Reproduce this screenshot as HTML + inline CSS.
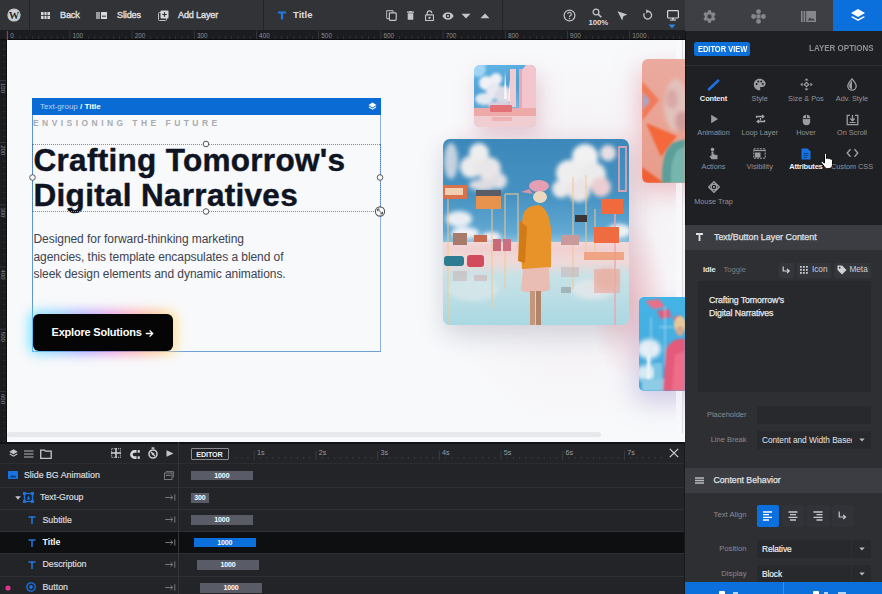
<!DOCTYPE html>
<html><head><meta charset="utf-8">
<style>
*{box-sizing:border-box;margin:0;padding:0}
html,body{width:882px;height:594px;overflow:hidden;background:#1e1f22;font-family:"Liberation Sans",sans-serif}
.a{position:absolute}
.t{color:#d5d6d8;white-space:nowrap}
</style></head><body>
<div class="a" style="left:0;top:0;width:685px;height:30px;background:#323337"></div>
<div class="a" style="left:685px;top:0;width:197px;height:31px;background:#3d3f44"></div>
<div class="a" style="left:7px;top:40px;width:678px;height:402px;background:#f8f9fb"></div>
<!-- TOP BAR -->
<div class="a" style="left:29px;top:0;width:1px;height:30px;background:#222327"></div>
<div class="a" style="left:263px;top:0;width:1px;height:30px;background:#222327"></div>
<div class="a" style="left:502px;top:0;width:1px;height:30px;background:#222327"></div>
<svg class="a" style="left:6.5px;top:8px" width="14" height="14" viewBox="0 0 14 14"><circle cx="7" cy="7" r="6.6" fill="#d4d5d7"/><circle cx="7" cy="7" r="5.6" fill="none" stroke="#9a9b9e" stroke-width="0.4"/><text x="7" y="10.6" text-anchor="middle" font-family="Liberation Serif" font-weight="bold" font-size="10.5" fill="#2a2b2f">W</text></svg>
<svg class="a" style="left:41px;top:12px" width="9" height="7" viewBox="0 0 9 7"><rect width="9" height="7" fill="#d6d7d9"/><path d="M3 0v7M6 0v7M0 3.5h9" stroke="#2c2d31" stroke-width="0.8"/></svg>
<div class="a t" style="left:60px;top:9px;font-size:9.1px;line-height:12px;color:#e0e1e3;-webkit-text-stroke:0.35px #e0e1e3;letter-spacing:-0.15px">Back</div>
<svg class="a" style="left:96px;top:12px" width="11" height="7" viewBox="0 0 11 7"><rect width="4" height="7" fill="#9a9b9e"/><rect x="5" width="6" height="7" fill="#d6d7d9"/><path d="M6 4.2h4" stroke="#2c2d31" stroke-width="1"/></svg>
<div class="a t" style="left:117px;top:9px;font-size:9.1px;line-height:12px;color:#e0e1e3;-webkit-text-stroke:0.35px #e0e1e3;letter-spacing:-0.15px">Slides</div>
<svg class="a" style="left:158px;top:10px" width="11" height="11" viewBox="0 0 11 11"><rect x="0.5" y="2.5" width="8" height="8" rx="1" fill="none" stroke="#bfc0c3" stroke-width="1"/><rect x="2.5" y="0.5" width="8" height="8" rx="1" fill="#d6d7d9"/><path d="M6.5 2.3v4.4M4.3 4.5h4.4" stroke="#2c2d31" stroke-width="1.2"/></svg>
<div class="a t" style="left:178px;top:9px;font-size:9.1px;line-height:12px;color:#e0e1e3;-webkit-text-stroke:0.35px #e0e1e3;letter-spacing:-0.15px">Add Layer</div>
<svg class="a" style="left:277px;top:11px" width="10" height="9" viewBox="0 0 10 9"><path d="M1 1.5h8M5 1.5v7" stroke="#1f7be3" stroke-width="2.2"/></svg>
<div class="a t" style="left:293px;top:9px;font-size:9.6px;line-height:12px;font-weight:bold;color:#dcdde0">Title</div>
<svg class="a" style="left:386px;top:10px" width="11" height="11" viewBox="0 0 11 11"><rect x="0.6" y="0.6" width="6.5" height="8" rx="0.8" fill="none" stroke="#a9aaad" stroke-width="1.1"/><rect x="3.4" y="2.8" width="6.8" height="7.6" rx="0.8" fill="#2c2d31" stroke="#c4c5c8" stroke-width="1.2"/></svg>
<svg class="a" style="left:407px;top:11px" width="7" height="9" viewBox="0 0 7 9"><rect x="0" y="0.5" width="7" height="1.3" fill="#c4c5c8"/><rect x="2.2" y="0" width="2.6" height="1" fill="#c4c5c8"/><rect x="0.7" y="2.3" width="5.6" height="6.5" rx="0.6" fill="#c4c5c8"/></svg>
<svg class="a" style="left:425px;top:10px" width="9" height="11" viewBox="0 0 9 11"><path d="M2.2 5V3.2a2.3 2.3 0 0 1 4.6 0" fill="none" stroke="#c4c5c8" stroke-width="1.2"/><rect x="0.5" y="4.8" width="8" height="5.8" rx="0.8" fill="none" stroke="#c4c5c8" stroke-width="1.2"/><rect x="3.5" y="6.8" width="2" height="2" fill="#c4c5c8"/></svg>
<svg class="a" style="left:442px;top:12px" width="12" height="8" viewBox="0 0 12 8"><path d="M0.3 4C2 1.2 3.8 0.3 6 0.3S10 1.2 11.7 4C10 6.8 8.2 7.7 6 7.7S2 6.8 0.3 4Z" fill="#c4c5c8"/><circle cx="6" cy="4" r="2.3" fill="#2c2d31"/><circle cx="6" cy="4" r="1.1" fill="#c4c5c8"/></svg>
<svg class="a" style="left:461px;top:13px" width="10" height="6" viewBox="0 0 10 6"><path d="M0.5 0.8h9L5 5.5Z" fill="#c4c5c8"/></svg>
<svg class="a" style="left:480px;top:13px" width="10" height="6" viewBox="0 0 10 6"><path d="M0.5 5.2h9L5 0.5Z" fill="#c4c5c8"/></svg>
<svg class="a" style="left:563px;top:9px" width="13" height="13" viewBox="0 0 13 13"><circle cx="6.5" cy="6.5" r="5.4" fill="none" stroke="#c4c5c8" stroke-width="1.2"/><path d="M4.7 5.1a1.8 1.8 0 1 1 2.5 1.6c-0.5 0.3-0.7 0.6-0.7 1.2" fill="none" stroke="#c4c5c8" stroke-width="1.2"/><circle cx="6.5" cy="9.6" r="0.75" fill="#c4c5c8"/></svg>
<svg class="a" style="left:592px;top:8px" width="10" height="10" viewBox="0 0 10 10"><circle cx="4" cy="4" r="2.9" fill="none" stroke="#c4c5c8" stroke-width="1.3"/><path d="M6.1 6.1L9.3 9.3" stroke="#c4c5c8" stroke-width="1.6"/></svg>
<div class="a t" style="left:588.5px;top:18px;font-size:7.8px;line-height:9px;font-weight:bold;color:#dcdde0;letter-spacing:-0.1px">100%</div>
<svg class="a" style="left:617px;top:10px" width="11" height="11" viewBox="0 0 11 11"><path d="M0.5 1.2L10.3 4.6L6.4 6.2L5.2 10.4Z" fill="#c4c5c8"/></svg>
<svg class="a" style="left:641px;top:9px" width="12" height="12" viewBox="0 0 12 12"><path d="M3.3 4.2A3.9 3.9 0 1 0 6 2.3" fill="none" stroke="#c4c5c8" stroke-width="1.3"/><path d="M5.2 0.2L8 2.4L5.2 4.5Z" fill="#c4c5c8"/></svg>
<svg class="a" style="left:666.5px;top:10px" width="12" height="11" viewBox="0 0 12 11"><rect x="0.6" y="0.6" width="10.8" height="7.4" rx="0.8" fill="none" stroke="#d6d7d9" stroke-width="1.2"/><rect x="5" y="8" width="2" height="1.6" fill="#d6d7d9"/><rect x="3" y="9.5" width="6" height="1.1" fill="#d6d7d9"/></svg>
<svg class="a" style="left:668px;top:24px" width="8" height="5" viewBox="0 0 8 5"><path d="M0.5 0.5h7L4 4.5Z" fill="#2b86ea"/></svg>
<!-- TABS -->
<div class="a" style="left:833px;top:0;width:49px;height:31px;background:#0b6fdc"></div>
<svg class="a" style="left:702px;top:9px" width="15" height="15" viewBox="0 0 24 24"><path fill="#86878b" d="M19.4 13c.04-.33.06-.66.06-1s-.02-.67-.06-1l2.1-1.65c.19-.15.24-.42.12-.64l-2-3.46c-.12-.22-.39-.3-.61-.22l-2.49 1c-.52-.4-1.08-.73-1.69-.98l-.38-2.65A.49.49 0 0 0 14 2h-4c-.25 0-.46.18-.49.42l-.38 2.65c-.61.25-1.17.59-1.69.98l-2.49-1c-.23-.09-.49 0-.61.22l-2 3.46c-.13.22-.07.49.12.64L4.57 11c-.04.33-.07.67-.07 1s.03.67.07 1l-2.11 1.65c-.19.15-.24.42-.12.64l2 3.46c.12.22.39.3.61.22l2.49-1c.52.4 1.08.73 1.69.98l.38 2.65c.03.24.24.42.49.42h4c.25 0 .46-.18.49-.42l.38-2.65c.61-.25 1.17-.59 1.69-.98l2.49 1c.23.09.49 0 .61-.22l2-3.46c.12-.22.07-.49-.12-.64L19.4 13zM12 15.5A3.5 3.5 0 1 1 12 8.5a3.5 3.5 0 0 1 0 7z"/></svg>
<svg class="a" style="left:751px;top:9px" width="15" height="15" viewBox="0 0 15 15"><circle cx="7.5" cy="2.6" r="2.4" fill="#86878b"/><circle cx="7.5" cy="12.4" r="2.4" fill="#86878b"/><circle cx="2.6" cy="7.5" r="2.4" fill="#86878b"/><circle cx="12.4" cy="7.5" r="2.4" fill="#86878b"/><rect x="5.5" y="5.5" width="4" height="4" fill="#86878b"/></svg>
<svg class="a" style="left:801px;top:11px" width="15" height="11" viewBox="0 0 15 11"><rect x="0" y="0" width="1.6" height="11" fill="#86878b"/><rect x="2.6" y="0" width="1.6" height="11" fill="#86878b"/><rect x="5.2" y="0" width="9.8" height="11" fill="#86878b"/><path d="M6.5 9.5L9 6.5L10.8 8.3L12 7.2L13.8 9.5Z" fill="#3d3f44"/></svg>
<svg class="a" style="left:850px;top:8px" width="16" height="16" viewBox="0 0 16 16"><path d="M8 1L15 5L8 9L1 5Z" fill="#fff"/><path d="M2.5 8.2L1 9L8 13L15 9L13.5 8.2L8 11.3Z" fill="#fff"/></svg>

<svg class="a" style="left:0;top:30px" width="685" height="11" viewBox="0 0 685 11">
<rect x="0" y="0" width="685" height="10" fill="#1b1c1f"/>
<rect x="7.30" y="1" width="0.8" height="9" fill="#3d3e42"/>
<text x="10.30" y="7.6" font-size="6.4" fill="#8e8f93" font-family="Liberation Sans">0</text>
<rect x="13.52" y="6" width="0.8" height="3.5" fill="#36373b"/>
<rect x="19.74" y="6" width="0.8" height="3.5" fill="#36373b"/>
<rect x="25.96" y="6" width="0.8" height="3.5" fill="#36373b"/>
<rect x="32.18" y="6" width="0.8" height="3.5" fill="#36373b"/>
<rect x="38.40" y="6" width="0.8" height="3.5" fill="#36373b"/>
<rect x="44.62" y="6" width="0.8" height="3.5" fill="#36373b"/>
<rect x="50.84" y="6" width="0.8" height="3.5" fill="#36373b"/>
<rect x="57.06" y="6" width="0.8" height="3.5" fill="#36373b"/>
<rect x="63.28" y="6" width="0.8" height="3.5" fill="#36373b"/>
<rect x="69.50" y="1" width="0.8" height="9" fill="#3d3e42"/>
<text x="72.50" y="7.6" font-size="6.4" fill="#8e8f93" font-family="Liberation Sans">100</text>
<rect x="75.72" y="6" width="0.8" height="3.5" fill="#36373b"/>
<rect x="81.94" y="6" width="0.8" height="3.5" fill="#36373b"/>
<rect x="88.16" y="6" width="0.8" height="3.5" fill="#36373b"/>
<rect x="94.38" y="6" width="0.8" height="3.5" fill="#36373b"/>
<rect x="100.60" y="6" width="0.8" height="3.5" fill="#36373b"/>
<rect x="106.82" y="6" width="0.8" height="3.5" fill="#36373b"/>
<rect x="113.04" y="6" width="0.8" height="3.5" fill="#36373b"/>
<rect x="119.26" y="6" width="0.8" height="3.5" fill="#36373b"/>
<rect x="125.48" y="6" width="0.8" height="3.5" fill="#36373b"/>
<rect x="131.70" y="1" width="0.8" height="9" fill="#3d3e42"/>
<text x="134.70" y="7.6" font-size="6.4" fill="#8e8f93" font-family="Liberation Sans">200</text>
<rect x="137.92" y="6" width="0.8" height="3.5" fill="#36373b"/>
<rect x="144.14" y="6" width="0.8" height="3.5" fill="#36373b"/>
<rect x="150.36" y="6" width="0.8" height="3.5" fill="#36373b"/>
<rect x="156.58" y="6" width="0.8" height="3.5" fill="#36373b"/>
<rect x="162.80" y="6" width="0.8" height="3.5" fill="#36373b"/>
<rect x="169.02" y="6" width="0.8" height="3.5" fill="#36373b"/>
<rect x="175.24" y="6" width="0.8" height="3.5" fill="#36373b"/>
<rect x="181.46" y="6" width="0.8" height="3.5" fill="#36373b"/>
<rect x="187.68" y="6" width="0.8" height="3.5" fill="#36373b"/>
<rect x="193.90" y="1" width="0.8" height="9" fill="#3d3e42"/>
<text x="196.90" y="7.6" font-size="6.4" fill="#8e8f93" font-family="Liberation Sans">300</text>
<rect x="200.12" y="6" width="0.8" height="3.5" fill="#36373b"/>
<rect x="206.34" y="6" width="0.8" height="3.5" fill="#36373b"/>
<rect x="212.56" y="6" width="0.8" height="3.5" fill="#36373b"/>
<rect x="218.78" y="6" width="0.8" height="3.5" fill="#36373b"/>
<rect x="225.00" y="6" width="0.8" height="3.5" fill="#36373b"/>
<rect x="231.22" y="6" width="0.8" height="3.5" fill="#36373b"/>
<rect x="237.44" y="6" width="0.8" height="3.5" fill="#36373b"/>
<rect x="243.66" y="6" width="0.8" height="3.5" fill="#36373b"/>
<rect x="249.88" y="6" width="0.8" height="3.5" fill="#36373b"/>
<rect x="256.10" y="1" width="0.8" height="9" fill="#3d3e42"/>
<text x="259.10" y="7.6" font-size="6.4" fill="#8e8f93" font-family="Liberation Sans">400</text>
<rect x="262.32" y="6" width="0.8" height="3.5" fill="#36373b"/>
<rect x="268.54" y="6" width="0.8" height="3.5" fill="#36373b"/>
<rect x="274.76" y="6" width="0.8" height="3.5" fill="#36373b"/>
<rect x="280.98" y="6" width="0.8" height="3.5" fill="#36373b"/>
<rect x="287.20" y="6" width="0.8" height="3.5" fill="#36373b"/>
<rect x="293.42" y="6" width="0.8" height="3.5" fill="#36373b"/>
<rect x="299.64" y="6" width="0.8" height="3.5" fill="#36373b"/>
<rect x="305.86" y="6" width="0.8" height="3.5" fill="#36373b"/>
<rect x="312.08" y="6" width="0.8" height="3.5" fill="#36373b"/>
<rect x="318.30" y="1" width="0.8" height="9" fill="#3d3e42"/>
<text x="321.30" y="7.6" font-size="6.4" fill="#8e8f93" font-family="Liberation Sans">500</text>
<rect x="324.52" y="6" width="0.8" height="3.5" fill="#36373b"/>
<rect x="330.74" y="6" width="0.8" height="3.5" fill="#36373b"/>
<rect x="336.96" y="6" width="0.8" height="3.5" fill="#36373b"/>
<rect x="343.18" y="6" width="0.8" height="3.5" fill="#36373b"/>
<rect x="349.40" y="6" width="0.8" height="3.5" fill="#36373b"/>
<rect x="355.62" y="6" width="0.8" height="3.5" fill="#36373b"/>
<rect x="361.84" y="6" width="0.8" height="3.5" fill="#36373b"/>
<rect x="368.06" y="6" width="0.8" height="3.5" fill="#36373b"/>
<rect x="374.28" y="6" width="0.8" height="3.5" fill="#36373b"/>
<rect x="380.50" y="1" width="0.8" height="9" fill="#3d3e42"/>
<text x="383.50" y="7.6" font-size="6.4" fill="#8e8f93" font-family="Liberation Sans">600</text>
<rect x="386.72" y="6" width="0.8" height="3.5" fill="#36373b"/>
<rect x="392.94" y="6" width="0.8" height="3.5" fill="#36373b"/>
<rect x="399.16" y="6" width="0.8" height="3.5" fill="#36373b"/>
<rect x="405.38" y="6" width="0.8" height="3.5" fill="#36373b"/>
<rect x="411.60" y="6" width="0.8" height="3.5" fill="#36373b"/>
<rect x="417.82" y="6" width="0.8" height="3.5" fill="#36373b"/>
<rect x="424.04" y="6" width="0.8" height="3.5" fill="#36373b"/>
<rect x="430.26" y="6" width="0.8" height="3.5" fill="#36373b"/>
<rect x="436.48" y="6" width="0.8" height="3.5" fill="#36373b"/>
<rect x="442.70" y="1" width="0.8" height="9" fill="#3d3e42"/>
<text x="445.70" y="7.6" font-size="6.4" fill="#8e8f93" font-family="Liberation Sans">700</text>
<rect x="448.92" y="6" width="0.8" height="3.5" fill="#36373b"/>
<rect x="455.14" y="6" width="0.8" height="3.5" fill="#36373b"/>
<rect x="461.36" y="6" width="0.8" height="3.5" fill="#36373b"/>
<rect x="467.58" y="6" width="0.8" height="3.5" fill="#36373b"/>
<rect x="473.80" y="6" width="0.8" height="3.5" fill="#36373b"/>
<rect x="480.02" y="6" width="0.8" height="3.5" fill="#36373b"/>
<rect x="486.24" y="6" width="0.8" height="3.5" fill="#36373b"/>
<rect x="492.46" y="6" width="0.8" height="3.5" fill="#36373b"/>
<rect x="498.68" y="6" width="0.8" height="3.5" fill="#36373b"/>
<rect x="504.90" y="1" width="0.8" height="9" fill="#3d3e42"/>
<text x="507.90" y="7.6" font-size="6.4" fill="#8e8f93" font-family="Liberation Sans">800</text>
<rect x="511.12" y="6" width="0.8" height="3.5" fill="#36373b"/>
<rect x="517.34" y="6" width="0.8" height="3.5" fill="#36373b"/>
<rect x="523.56" y="6" width="0.8" height="3.5" fill="#36373b"/>
<rect x="529.78" y="6" width="0.8" height="3.5" fill="#36373b"/>
<rect x="536.00" y="6" width="0.8" height="3.5" fill="#36373b"/>
<rect x="542.22" y="6" width="0.8" height="3.5" fill="#36373b"/>
<rect x="548.44" y="6" width="0.8" height="3.5" fill="#36373b"/>
<rect x="554.66" y="6" width="0.8" height="3.5" fill="#36373b"/>
<rect x="560.88" y="6" width="0.8" height="3.5" fill="#36373b"/>
<rect x="567.10" y="1" width="0.8" height="9" fill="#3d3e42"/>
<text x="570.10" y="7.6" font-size="6.4" fill="#8e8f93" font-family="Liberation Sans">900</text>
<rect x="573.32" y="6" width="0.8" height="3.5" fill="#36373b"/>
<rect x="579.54" y="6" width="0.8" height="3.5" fill="#36373b"/>
<rect x="585.76" y="6" width="0.8" height="3.5" fill="#36373b"/>
<rect x="591.98" y="6" width="0.8" height="3.5" fill="#36373b"/>
<rect x="598.20" y="6" width="0.8" height="3.5" fill="#36373b"/>
<rect x="604.42" y="6" width="0.8" height="3.5" fill="#36373b"/>
<rect x="610.64" y="6" width="0.8" height="3.5" fill="#36373b"/>
<rect x="616.86" y="6" width="0.8" height="3.5" fill="#36373b"/>
<rect x="623.08" y="6" width="0.8" height="3.5" fill="#36373b"/>
<rect x="629.30" y="1" width="0.8" height="9" fill="#3d3e42"/>
<text x="632.30" y="7.6" font-size="6.4" fill="#8e8f93" font-family="Liberation Sans">1000</text>
<rect x="635.52" y="6" width="0.8" height="3.5" fill="#36373b"/>
<rect x="641.74" y="6" width="0.8" height="3.5" fill="#36373b"/>
<rect x="647.96" y="6" width="0.8" height="3.5" fill="#36373b"/>
<rect x="654.18" y="6" width="0.8" height="3.5" fill="#36373b"/>
<rect x="660.40" y="6" width="0.8" height="3.5" fill="#36373b"/>
<rect x="666.62" y="6" width="0.8" height="3.5" fill="#36373b"/>
<rect x="672.84" y="6" width="0.8" height="3.5" fill="#36373b"/>
<rect x="679.06" y="6" width="0.8" height="3.5" fill="#36373b"/>
<rect x="0" y="9" width="685" height="1" fill="#0c0c0e"/><rect x="6.8" y="1" width="1.2" height="9" fill="#b0305a"/>
<rect x="0" y="10" width="7" height="1" fill="#b0305a"/>
</svg>
<svg class="a" style="left:0;top:40px" width="7" height="402" viewBox="0 0 7 402">
<rect width="7" height="402" fill="#1b1c1f"/>
<rect x="6" width="1" height="402" fill="#0c0c0e"/>
<rect x="0" y="-22.20" width="6" height="0.8" fill="#3d3e42"/>
<rect x="3" y="-15.98" width="3" height="0.8" fill="#2e2f33"/>
<rect x="3" y="-9.76" width="3" height="0.8" fill="#2e2f33"/>
<rect x="3" y="-3.54" width="3" height="0.8" fill="#2e2f33"/>
<rect x="3" y="2.68" width="3" height="0.8" fill="#2e2f33"/>
<rect x="3" y="8.90" width="3" height="0.8" fill="#2e2f33"/>
<rect x="3" y="15.12" width="3" height="0.8" fill="#2e2f33"/>
<rect x="3" y="21.34" width="3" height="0.8" fill="#2e2f33"/>
<rect x="3" y="27.56" width="3" height="0.8" fill="#2e2f33"/>
<rect x="3" y="33.78" width="3" height="0.8" fill="#2e2f33"/>
<text transform="translate(1 -19.20) rotate(90)" font-size="6" fill="#8e8f93" font-family="Liberation Sans">0</text>
<rect x="0" y="40.00" width="6" height="0.8" fill="#3d3e42"/>
<rect x="3" y="46.22" width="3" height="0.8" fill="#2e2f33"/>
<rect x="3" y="52.44" width="3" height="0.8" fill="#2e2f33"/>
<rect x="3" y="58.66" width="3" height="0.8" fill="#2e2f33"/>
<rect x="3" y="64.88" width="3" height="0.8" fill="#2e2f33"/>
<rect x="3" y="71.10" width="3" height="0.8" fill="#2e2f33"/>
<rect x="3" y="77.32" width="3" height="0.8" fill="#2e2f33"/>
<rect x="3" y="83.54" width="3" height="0.8" fill="#2e2f33"/>
<rect x="3" y="89.76" width="3" height="0.8" fill="#2e2f33"/>
<rect x="3" y="95.98" width="3" height="0.8" fill="#2e2f33"/>
<text transform="translate(1 43.00) rotate(90)" font-size="6" fill="#8e8f93" font-family="Liberation Sans">100</text>
<rect x="0" y="102.20" width="6" height="0.8" fill="#3d3e42"/>
<rect x="3" y="108.42" width="3" height="0.8" fill="#2e2f33"/>
<rect x="3" y="114.64" width="3" height="0.8" fill="#2e2f33"/>
<rect x="3" y="120.86" width="3" height="0.8" fill="#2e2f33"/>
<rect x="3" y="127.08" width="3" height="0.8" fill="#2e2f33"/>
<rect x="3" y="133.30" width="3" height="0.8" fill="#2e2f33"/>
<rect x="3" y="139.52" width="3" height="0.8" fill="#2e2f33"/>
<rect x="3" y="145.74" width="3" height="0.8" fill="#2e2f33"/>
<rect x="3" y="151.96" width="3" height="0.8" fill="#2e2f33"/>
<rect x="3" y="158.18" width="3" height="0.8" fill="#2e2f33"/>
<text transform="translate(1 105.20) rotate(90)" font-size="6" fill="#8e8f93" font-family="Liberation Sans">200</text>
<rect x="0" y="164.40" width="6" height="0.8" fill="#3d3e42"/>
<rect x="3" y="170.62" width="3" height="0.8" fill="#2e2f33"/>
<rect x="3" y="176.84" width="3" height="0.8" fill="#2e2f33"/>
<rect x="3" y="183.06" width="3" height="0.8" fill="#2e2f33"/>
<rect x="3" y="189.28" width="3" height="0.8" fill="#2e2f33"/>
<rect x="3" y="195.50" width="3" height="0.8" fill="#2e2f33"/>
<rect x="3" y="201.72" width="3" height="0.8" fill="#2e2f33"/>
<rect x="3" y="207.94" width="3" height="0.8" fill="#2e2f33"/>
<rect x="3" y="214.16" width="3" height="0.8" fill="#2e2f33"/>
<rect x="3" y="220.38" width="3" height="0.8" fill="#2e2f33"/>
<text transform="translate(1 167.40) rotate(90)" font-size="6" fill="#8e8f93" font-family="Liberation Sans">300</text>
<rect x="0" y="226.60" width="6" height="0.8" fill="#3d3e42"/>
<rect x="3" y="232.82" width="3" height="0.8" fill="#2e2f33"/>
<rect x="3" y="239.04" width="3" height="0.8" fill="#2e2f33"/>
<rect x="3" y="245.26" width="3" height="0.8" fill="#2e2f33"/>
<rect x="3" y="251.48" width="3" height="0.8" fill="#2e2f33"/>
<rect x="3" y="257.70" width="3" height="0.8" fill="#2e2f33"/>
<rect x="3" y="263.92" width="3" height="0.8" fill="#2e2f33"/>
<rect x="3" y="270.14" width="3" height="0.8" fill="#2e2f33"/>
<rect x="3" y="276.36" width="3" height="0.8" fill="#2e2f33"/>
<rect x="3" y="282.58" width="3" height="0.8" fill="#2e2f33"/>
<text transform="translate(1 229.60) rotate(90)" font-size="6" fill="#8e8f93" font-family="Liberation Sans">400</text>
<rect x="0" y="288.80" width="6" height="0.8" fill="#3d3e42"/>
<rect x="3" y="295.02" width="3" height="0.8" fill="#2e2f33"/>
<rect x="3" y="301.24" width="3" height="0.8" fill="#2e2f33"/>
<rect x="3" y="307.46" width="3" height="0.8" fill="#2e2f33"/>
<rect x="3" y="313.68" width="3" height="0.8" fill="#2e2f33"/>
<rect x="3" y="319.90" width="3" height="0.8" fill="#2e2f33"/>
<rect x="3" y="326.12" width="3" height="0.8" fill="#2e2f33"/>
<rect x="3" y="332.34" width="3" height="0.8" fill="#2e2f33"/>
<rect x="3" y="338.56" width="3" height="0.8" fill="#2e2f33"/>
<rect x="3" y="344.78" width="3" height="0.8" fill="#2e2f33"/>
<text transform="translate(1 291.80) rotate(90)" font-size="6" fill="#8e8f93" font-family="Liberation Sans">500</text>
<rect x="0" y="351.00" width="6" height="0.8" fill="#3d3e42"/>
<rect x="3" y="357.22" width="3" height="0.8" fill="#2e2f33"/>
<rect x="3" y="363.44" width="3" height="0.8" fill="#2e2f33"/>
<rect x="3" y="369.66" width="3" height="0.8" fill="#2e2f33"/>
<rect x="3" y="375.88" width="3" height="0.8" fill="#2e2f33"/>
<rect x="3" y="382.10" width="3" height="0.8" fill="#2e2f33"/>
<rect x="3" y="388.32" width="3" height="0.8" fill="#2e2f33"/>
<rect x="3" y="394.54" width="3" height="0.8" fill="#2e2f33"/>
<rect x="3" y="400.76" width="3" height="0.8" fill="#2e2f33"/>
<rect x="3" y="406.98" width="3" height="0.8" fill="#2e2f33"/>
<text transform="translate(1 354.00) rotate(90)" font-size="6" fill="#8e8f93" font-family="Liberation Sans">600</text>
<rect x="0" y="413.20" width="6" height="0.8" fill="#3d3e42"/>
<rect x="3" y="419.42" width="3" height="0.8" fill="#2e2f33"/>
<rect x="3" y="425.64" width="3" height="0.8" fill="#2e2f33"/>
<rect x="3" y="431.86" width="3" height="0.8" fill="#2e2f33"/>
<rect x="3" y="438.08" width="3" height="0.8" fill="#2e2f33"/>
<rect x="3" y="444.30" width="3" height="0.8" fill="#2e2f33"/>
<rect x="3" y="450.52" width="3" height="0.8" fill="#2e2f33"/>
<rect x="3" y="456.74" width="3" height="0.8" fill="#2e2f33"/>
<rect x="3" y="462.96" width="3" height="0.8" fill="#2e2f33"/>
<rect x="3" y="469.18" width="3" height="0.8" fill="#2e2f33"/>
<text transform="translate(1 416.20) rotate(90)" font-size="6" fill="#8e8f93" font-family="Liberation Sans">700</text>
</svg>

<!-- CANVAS CONTENT -->
<div class="a" style="left:7px;top:40px;width:678px;height:402px;overflow:hidden">
 <!-- soft shadows around images -->
 <div class="a" style="left:420px;top:10px;width:260px;height:380px;background:radial-gradient(ellipse at 55% 50%,rgba(230,205,215,0.35),rgba(240,235,240,0) 70%)"></div>
 <div class="a" style="left:467px;top:25px;width:62px;height:62px;border-radius:6px;background:#eee;box-shadow:4px 10px 20px rgba(215,160,180,0.5)"></div>
 <div class="a" style="left:436px;top:99px;width:186px;height:186px;border-radius:7px;background:#eee;box-shadow:0 12px 26px rgba(175,205,215,0.45),6px 4px 22px rgba(235,165,175,0.4)"></div>
 <div class="a" style="left:635px;top:19px;width:60px;height:124px;border-radius:6px;background:#eee;box-shadow:-4px 10px 24px rgba(225,150,160,0.55)"></div>
 <div class="a" style="left:632px;top:257px;width:60px;height:94px;border-radius:5px;background:#eee;box-shadow:-4px 12px 24px rgba(170,160,210,0.5)"></div>
 <div class="a" style="left:560px;top:120px;width:120px;height:260px;background:radial-gradient(ellipse 40px 80px at 62px 140px,rgba(235,160,170,0.5),rgba(240,200,210,0) 100%)"></div>
 <!-- horizontal scrollbar -->
 <div class="a" style="left:0;top:391.8px;width:594px;height:4.8px;border-radius:2.5px;background:#e7e8eb"></div>
 <div class="a" style="left:669px;top:0;width:7px;height:393px;background:rgba(250,250,252,0.7);border-right:1px solid rgba(200,200,206,0.6)"></div>
</div>
<!-- small image -->
<svg class="a" style="left:474px;top:65px" width="62" height="62" viewBox="0 0 62 62">
<defs><clipPath id="c1"><rect width="62" height="62" rx="6"/></clipPath>
<linearGradient id="sky1" x1="0" y1="0" x2="0.3" y2="1"><stop offset="0" stop-color="#62b6e6"/><stop offset="0.5" stop-color="#4c9ed4"/><stop offset="1" stop-color="#8cc2e2"/></linearGradient>
<filter id="b1"><feGaussianBlur stdDeviation="1.5"/></filter><filter id="b05"><feGaussianBlur stdDeviation="0.5"/></filter></defs>
<g clip-path="url(#c1)">
<rect width="62" height="62" fill="url(#sky1)"/>
<circle cx="4" cy="4" r="8" fill="#bfe6fa" opacity="0.7" filter="url(#b1)"/>
<g filter="url(#b1)">
<circle cx="12" cy="18" r="7" fill="#f2f2f6"/>
<circle cx="22" cy="14" r="6" fill="#eef0f6"/>
<circle cx="20" cy="26" r="8" fill="#e8e8f0"/>
<circle cx="30" cy="30" r="9" fill="#dcdce8"/>
<ellipse cx="10" cy="34" rx="9" ry="6" fill="#e4eaf2"/>
<ellipse cx="26" cy="40" rx="12" ry="4" fill="#d8d0e0"/>
</g>
<g filter="url(#b05)">
<path d="M30 34L31 6L33 34Z" fill="#f8f6fa"/>
<path d="M34 36L36 14L38 36Z" fill="#f4eef4"/>
<rect x="36" y="4" width="6" height="38" fill="#f0cbd2"/>
<path d="M47 53V6L52 0H62V53Z" fill="#f2c6cc"/>
<rect x="45" y="4" width="3" height="49" fill="#e6a9b4"/>
<rect x="0" y="43" width="62" height="9" fill="#eeaaa8"/>
<rect x="16" y="40" width="22" height="7" rx="1" fill="#e37276"/>
<rect x="0" y="51" width="62" height="11" fill="#f0cdd0"/>
<rect x="18" y="52" width="20" height="4" fill="#ec9ea2" opacity="0.6"/>
</g>
</g></svg>
<!-- big image -->
<svg class="a" style="left:443px;top:139px" width="186" height="186" viewBox="0 0 186 186">
<defs><clipPath id="c2"><rect width="186" height="186" rx="7"/></clipPath>
<linearGradient id="sky2" x1="0" y1="0" x2="0" y2="1"><stop offset="0" stop-color="#3c88ba"/><stop offset="0.3" stop-color="#4592c2"/><stop offset="0.5" stop-color="#62a8d2"/><stop offset="0.56" stop-color="#8cc4e0"/><stop offset="1" stop-color="#a8d6e2"/></linearGradient>
<linearGradient id="fl2" x1="0" y1="0" x2="0" y2="1"><stop offset="0" stop-color="#f2d8d8"/><stop offset="0.25" stop-color="#eed8d8"/><stop offset="0.4" stop-color="#c8e2e6"/><stop offset="1" stop-color="#aad8e2"/></linearGradient>
<filter id="b2"><feGaussianBlur stdDeviation="2.2"/></filter><filter id="b3"><feGaussianBlur stdDeviation="0.7"/></filter><filter id="b6"><feGaussianBlur stdDeviation="2.5"/></filter></defs>
<g clip-path="url(#c2)">
<rect width="186" height="186" fill="url(#sky2)"/>
<rect y="103" width="186" height="83" fill="url(#fl2)"/>
<g filter="url(#b2)">
<circle cx="36" cy="14" r="10" fill="#eeeeef"/>
<circle cx="28" cy="28" r="11" fill="#ecebec"/>
<circle cx="46" cy="30" r="12" fill="#e8e6e8"/>
<circle cx="56" cy="42" r="8" fill="#e2e0e4"/>
<ellipse cx="40" cy="46" rx="14" ry="6" fill="#dcdce2"/>
<ellipse cx="8" cy="22" rx="7" ry="18" fill="#d4dae4" opacity="0.9"/>
<circle cx="142" cy="18" r="13" fill="#f2f1f2"/>
<circle cx="126" cy="34" r="13" fill="#efeeef"/>
<circle cx="150" cy="36" r="13" fill="#ecebec"/>
<circle cx="118" cy="50" r="9" fill="#eceaec"/>
<circle cx="136" cy="52" r="11" fill="#ebe4e6"/>
<circle cx="158" cy="48" r="10" fill="#eccdd2"/>
<circle cx="165" cy="14" r="8" fill="#e8dfe4"/>
<ellipse cx="16" cy="80" rx="13" ry="8" fill="#e8eef4"/>
<ellipse cx="22" cy="94" rx="14" ry="6" fill="#eef2f6"/>
<ellipse cx="176" cy="92" rx="12" ry="7" fill="#eef0f4"/>
<ellipse cx="48" cy="98" rx="10" ry="5" fill="#eef0f4"/>
</g>
<g filter="url(#b6)">
<ellipse cx="30" cy="150" rx="26" ry="12" fill="#d2e6ea"/>
<ellipse cx="150" cy="150" rx="22" ry="10" fill="#dfe6ea"/>
<ellipse cx="164" cy="140" rx="12" ry="12" fill="#eab8b0" opacity="0.7"/>
<ellipse cx="92" cy="110" rx="90" ry="6" fill="#f2c4c0" opacity="0.35"/>
</g>
<g filter="url(#b3)">
<path d="M5 60V186M49 68V170M62 55V150M130 38V150M143 36V120M152 70V118M62 55H75V110" stroke="#f2c890" stroke-width="1.4" fill="none" opacity="0.7"/>
<path d="M176 8H183V52H176Z" stroke="#f0a4b0" stroke-width="1.8" fill="none" opacity="0.85"/><path d="M172 60V186" stroke="#f0a4b0" stroke-width="2" fill="none" opacity="0.7"/>
<rect x="0" y="46" width="24" height="14" fill="#d9714e"/>
<rect x="2" y="49" width="18" height="7" fill="#efd0b0"/>
<rect x="33" y="51" width="25" height="7" fill="#5a5c68"/>
<rect x="33" y="57" width="25" height="13" fill="#e7934e"/>
<rect x="158" y="60" width="22" height="15" fill="#f06a3c"/>
<rect x="151" y="88" width="25" height="16" fill="#ee6c40"/>
<rect x="132" y="76" width="12" height="7" fill="#3a3434"/>
<rect x="10" y="94" width="14" height="12" fill="#a87a6c"/>
<rect x="31" y="96" width="13" height="7" fill="#c86a50"/>
<rect x="50" y="100" width="8" height="12" fill="#c86a78"/>
<rect x="60" y="100" width="8" height="12" fill="#cc7080"/>
<rect x="1" y="117" width="20" height="10" rx="3" fill="#2f7c92"/>
<rect x="24" y="116" width="17" height="12" rx="3" fill="#d24c5c"/>
<rect x="141" y="113" width="40" height="8" fill="#ef9c78" opacity="0.85"/>
<rect x="151" y="130" width="26" height="24" fill="#e9ab9c" opacity="0.65"/>
<rect x="10" y="132" width="14" height="10" fill="#c8a8a8" opacity="0.45"/>
<rect x="31" y="136" width="13" height="6" fill="#d0a0a0" opacity="0.45"/>
<rect x="118" y="96" width="18" height="10" fill="#c89a9c"/>
<rect x="118" y="128" width="18" height="10" fill="#c4b0b4" opacity="0.5"/>
<rect x="118" y="148" width="10" height="6" fill="#8a8a90" opacity="0.5"/>
</g>
<g filter="url(#b3)">
<ellipse cx="96" cy="47" rx="10" ry="6" fill="#e4a0b2"/>
<path d="M86 50L78 53L90 55Z" fill="#dc94a6"/>
<ellipse cx="97" cy="58" rx="7" ry="6" fill="#ead8c0"/>
<path d="M80 76Q83 66 96 66Q106 70 108 90L108 128Q96 134 79 130L77 100Z" fill="#e8922a"/>
<path d="M77 82L75 122L82 124L84 88Z" fill="#d27a16"/>
<path d="M80 130L78 152Q92 156 107 151L106 128Z" fill="#e9bcb4"/>
<rect x="87" y="152" width="5" height="34" fill="#c4967c"/>
<rect x="93" y="152" width="5" height="34" fill="#b2846c"/>
</g>
</g></svg>
<!-- top-right image -->
<svg class="a" style="left:642px;top:59px" width="43" height="124" viewBox="0 0 43 124">
<defs><clipPath id="c3"><rect width="60" height="124" rx="6"/></clipPath><filter id="b4"><feGaussianBlur stdDeviation="0.9"/></filter><filter id="b4b"><feGaussianBlur stdDeviation="2"/></filter>
<linearGradient id="tr" x1="0" y1="0" x2="0" y2="1"><stop offset="0" stop-color="#eaaa9e"/><stop offset="1" stop-color="#e89c8a"/></linearGradient></defs>
<g clip-path="url(#c3)"><rect width="60" height="124" fill="url(#tr)"/>
<g filter="url(#b4)">
<path d="M0 22L17 41L0 62Z" fill="#f27a58"/>
<path d="M1 33L8 42L1 51Z" fill="#a9a6bf"/>
<path d="M4 64L35 77L19 98Z" fill="#f4683a"/>
<path d="M0 108L22 124H0Z" fill="#ef5f34"/>
</g>
<g filter="url(#b4b)">
<ellipse cx="34" cy="46" rx="12" ry="26" fill="#e2c2bc"/>
<ellipse cx="30" cy="40" rx="6" ry="10" fill="#d9a8a6"/>
<ellipse cx="40" cy="62" rx="7" ry="10" fill="#cf9c9c"/>
</g>
<g filter="url(#b4)">
<path d="M20 124Q19 92 31 84L43 80V124Z" fill="#5c9f9a"/>
<path d="M29 124Q28 98 37 90L43 88V124Z" fill="#76b6ae"/>
</g></g></svg>
<!-- bottom-right image -->
<svg class="a" style="left:639px;top:297px" width="46" height="94" viewBox="0 0 46 94">
<defs><clipPath id="c4"><rect width="60" height="94" rx="5"/></clipPath><filter id="b5"><feGaussianBlur stdDeviation="1"/></filter><filter id="b5b"><feGaussianBlur stdDeviation="2.2"/></filter>
<linearGradient id="br" x1="0" y1="0" x2="0" y2="1"><stop offset="0" stop-color="#43b4e6"/><stop offset="1" stop-color="#4aa6d8"/></linearGradient></defs>
<g clip-path="url(#c4)"><rect width="60" height="94" fill="url(#br)"/>
<g filter="url(#b5b)">
<ellipse cx="10" cy="52" rx="12" ry="10" fill="#e4eef6"/>
<ellipse cx="8" cy="76" rx="12" ry="8" fill="#d4eaf4"/>
</g>
<g filter="url(#b5)">
<path d="M6 4L20 2L26 10L14 12Z" fill="#e8708a"/>
<path d="M18 14L30 12L32 20L22 22Z" fill="#e25c7c"/>
<path d="M34 20L42 18L44 26L36 27Z" fill="#e06a86"/>
<path d="M12 20V90M26 10V70M20 30H34" stroke="#bfe4f4" stroke-width="0.8" fill="none"/>
<rect x="8" y="58" width="3" height="32" fill="#eef6fa"/>
<rect x="15" y="66" width="8" height="26" fill="#7cc4e4"/>
<rect x="3" y="82" width="22" height="12" fill="#8ecbe6"/>
<ellipse cx="41" cy="28" rx="6" ry="9" fill="#e8c89a"/>
<ellipse cx="41" cy="34" rx="4" ry="5" fill="#d8a890"/>
<path d="M24 94L27 52Q34 40 46 42V94Z" fill="#e45a7a"/>
<path d="M33 94L36 58L46 54V94Z" fill="#ee6e8a"/>
</g></g></svg>
<!-- group selection box -->
<div class="a" style="left:32px;top:98px;width:349px;height:17px;background:#0b6bd4"></div>
<div class="a t" style="left:40px;top:101px;font-size:8px;line-height:11px;color:#b9d3f3">Text-group <b style="color:#fff">/ Title</b></div>
<svg class="a" style="left:368px;top:102px" width="9" height="9" viewBox="0 0 9 9"><path d="M4.5 0.5L8.5 3L4.5 5.5L0.5 3Z" fill="#fff"/><path d="M1.3 4.6L0.5 5.2L4.5 7.8L8.5 5.2L7.7 4.6L4.5 6.6Z" fill="#fff"/></svg>
<div class="a" style="left:32px;top:115px;width:1px;height:237px;background:#5e97d6"></div>
<div class="a" style="left:380px;top:115px;width:1px;height:237px;background:#8fb3dc"></div>
<div class="a" style="left:32px;top:351px;width:349px;height:1px;background:#6ea0d8"></div>
<!-- subtitle -->
<div class="a t" style="left:33px;top:117.5px;font-size:8.5px;line-height:10px;letter-spacing:3.44px;font-weight:bold;color:#a9acb1">ENVISIONING THE FUTURE</div>
<!-- title -->
<div class="a t" style="left:33.5px;top:143px;font-size:31.5px;line-height:34.5px;font-weight:bold;color:#0f1422;letter-spacing:0.3px;-webkit-text-stroke:0.45px #0f1422">Crafting Tomorrow's<br>Digital Narratives</div>
<!-- title selection -->
<div class="a" style="left:33px;top:143.5px;width:347px;height:0;border-top:1px dotted #8a8c90"></div>
<div class="a" style="left:33px;top:211px;width:347px;height:0;border-top:1px dotted #8a8c90"></div>
<div class="a" style="left:32px;top:144px;width:0;height:68px;border-left:1px dotted #4a78b0"></div>
<div class="a" style="left:379.5px;top:144px;width:0;height:68px;border-left:1px dotted #4a78b0"></div>
<svg class="a" style="left:26px;top:138px" width="362" height="82" viewBox="0 0 362 82">
<g fill="#fafbfc" stroke="#55575c" stroke-width="1">
<circle cx="180" cy="6" r="2.8"/><circle cx="6.5" cy="39.5" r="2.8"/><circle cx="354" cy="39.5" r="2.8"/><circle cx="180" cy="73.5" r="2.8"/>
<circle cx="354" cy="73.5" r="4.6" stroke-width="1.1"/></g>
<path d="M351.8 71.3L356.2 75.7M351.6 73.2V71.1H353.7M356.4 73.8V75.9H354.3" stroke="#3a3c40" stroke-width="0.9" fill="none"/>
</svg>
<!-- description -->
<div class="a t" style="left:33.5px;top:231.4px;font-size:12px;line-height:17.4px;color:#3d4350;letter-spacing:-0.06px">Designed for forward-thinking marketing<br>agencies, this template encapsulates a blend of<br>sleek design elements and dynamic animations.</div>
<!-- button glow -->
<div class="a" style="left:29px;top:311px;width:148px;height:43px;border-radius:8px;background:linear-gradient(90deg,#58e4ff 0%,#6fc4ff 18%,#9a8cff 38%,#e07ee0 55%,#ff8c9c 70%,#ffb070 84%,#ffe98a 100%);filter:blur(6px);opacity:0.8"></div>
<div class="a" style="left:33px;top:314px;width:140px;height:37px;border-radius:6px;background:#050506"></div>
<div class="a t" style="left:51.5px;top:326px;font-size:11px;line-height:13px;font-weight:bold;color:#fff;letter-spacing:-0.2px">Explore Solutions</div>
<svg class="a" style="left:145px;top:328.5px" width="9" height="9" viewBox="0 0 9 9"><path d="M0.8 4.5H7.6M4.6 1.4L7.7 4.5L4.6 7.6" fill="none" stroke="#fff" stroke-width="1.3"/></svg>

<!-- RIGHT PANEL -->
<div class="a" style="left:685px;top:31px;width:197px;height:194px;background:#1f2023"></div>
<div class="a" style="left:685px;top:31px;width:1px;height:411px;background:#121315"></div>
<div class="a" style="left:694px;top:42px;width:56px;height:14px;border-radius:2.5px;background:#0b6fdc"></div>
<div class="a t" style="left:697.5px;top:43.5px;font-size:8.3px;line-height:10px;font-weight:bold;color:#fff;transform:scaleX(0.9);transform-origin:0 0">EDITOR VIEW</div>
<div class="a t" style="left:808.6px;top:42.8px;font-size:9.1px;line-height:11px;font-weight:bold;color:#8e8f93;transform:scaleX(0.88);transform-origin:0 0">LAYER OPTIONS</div>
<div class="a" style="left:685px;top:65px;width:197px;height:1px;background:#2e2f33"></div>
<!-- grid labels -->
<div class="a t" style="left:690.5px;top:93.5px;width:46px;text-align:center;font-size:7.5px;line-height:10px;color:#eeeff1;font-weight:bold;letter-spacing:-0.15px">Content</div>
<div class="a t" style="left:736.7px;top:93.5px;width:46px;text-align:center;font-size:7.3px;line-height:10px;color:#929397">Style</div>
<div class="a t" style="left:782.9px;top:93.5px;width:46px;text-align:center;font-size:7.3px;line-height:10px;color:#929397">Size &amp; Pos</div>
<div class="a t" style="left:829px;top:93.5px;width:46px;text-align:center;font-size:7.3px;line-height:10px;color:#929397">Adv. Style</div>
<div class="a t" style="left:690.5px;top:128px;width:46px;text-align:center;font-size:7.3px;line-height:10px;color:#929397">Animation</div>
<div class="a t" style="left:736.7px;top:128px;width:46px;text-align:center;font-size:7.3px;line-height:10px;color:#929397">Loop Layer</div>
<div class="a t" style="left:782.9px;top:128px;width:46px;text-align:center;font-size:7.3px;line-height:10px;color:#929397">Hover</div>
<div class="a t" style="left:829px;top:128px;width:46px;text-align:center;font-size:7.3px;line-height:10px;color:#929397">On Scroll</div>
<div class="a t" style="left:690.5px;top:162px;width:46px;text-align:center;font-size:7.3px;line-height:10px;color:#929397">Actions</div>
<div class="a t" style="left:736.7px;top:162px;width:46px;text-align:center;font-size:7.3px;line-height:10px;color:#929397">Visibility</div>
<div class="a t" style="left:782.9px;top:162px;width:46px;text-align:center;font-size:7.5px;line-height:10px;color:#f0f1f3;font-weight:bold;letter-spacing:-0.2px">Attributes</div>
<div class="a t" style="left:829px;top:162px;width:46px;text-align:center;font-size:7.3px;line-height:10px;color:#929397">Custom CSS</div>
<div class="a t" style="left:690.5px;top:196.5px;width:46px;text-align:center;font-size:7.3px;line-height:10px;color:#929397">Mouse Trap</div>
<!-- grid icons -->
<svg class="a" style="left:707px;top:79px" width="13" height="12" viewBox="0 0 13 12"><path d="M2 10.3L11.2 1.6" stroke="#1a73e2" stroke-width="2.6" stroke-linecap="round"/></svg>
<svg class="a" style="left:753px;top:78px" width="13" height="13" viewBox="0 0 13 13"><path d="M6.5 0.8C3.3 0.8 0.8 3.3 0.8 6.4c0 3.1 2.5 5.8 5.6 5.8 0.6 0 1-0.4 1-1 0-0.5-0.4-0.7-0.4-1.2 0-0.5 0.4-0.9 0.9-0.9h1.3c1.9 0 3.5-1.6 3.5-3.5C12.2 2.9 9.7 0.8 6.5 0.8Z" fill="#9c9da1"/><circle cx="3.6" cy="6" r="1" fill="#1f2023"/><circle cx="5.3" cy="3.6" r="1" fill="#1f2023"/><circle cx="8.2" cy="3.6" r="1" fill="#1f2023"/><circle cx="9.8" cy="6" r="1" fill="#1f2023"/></svg>
<svg class="a" style="left:799.5px;top:78px" width="13" height="13" viewBox="0 0 13 13"><path d="M6.5 0.3L8.6 2.6H4.4Z M6.5 12.7L8.6 10.4H4.4Z M0.3 6.5L2.6 4.4V8.6Z M12.7 6.5L10.4 4.4V8.6Z" fill="#9c9da1"/><rect x="4.3" y="4.3" width="4.4" height="4.4" fill="#9c9da1" transform="rotate(45 6.5 6.5)"/><circle cx="6.5" cy="6.5" r="1.1" fill="#1f2023"/></svg>
<svg class="a" style="left:846px;top:78px" width="12" height="13" viewBox="0 0 12 13"><path d="M6 0.8C4 3.4 1.8 5.4 1.8 8a4.2 4.2 0 0 0 8.4 0C10.2 5.4 8 3.4 6 0.8Z" fill="none" stroke="#9c9da1" stroke-width="1.3"/><path d="M6 2.6C4.6 4.6 3.1 6.2 3.1 8S4.4 11 6 11Z" fill="#9c9da1"/></svg>
<svg class="a" style="left:710px;top:114px" width="9" height="10" viewBox="0 0 9 10"><path d="M1.2 0.8L8 5L1.2 9.2Z" fill="#9c9da1"/></svg>
<svg class="a" style="left:754.5px;top:114px" width="11" height="10" viewBox="0 0 11 10"><path d="M1.5 4V2.5H8.5M7 1L8.8 2.5L7 4M9.5 6V7.5H2.5M4 6L2.2 7.5L4 9" fill="none" stroke="#a4a5a9" stroke-width="1.3"/><path d="M5.5 4V6.5" stroke="#a4a5a9" stroke-width="1.2"/></svg>
<svg class="a" style="left:801.5px;top:113.5px" width="9" height="12" viewBox="0 0 9 12"><rect x="0.8" y="0.8" width="7.4" height="10.4" rx="3.7" fill="#9c9da1"/><path d="M4.5 0.8V4.6M0.8 4.6H8.2" stroke="#1f2023" stroke-width="0.9"/></svg>
<svg class="a" style="left:845.5px;top:113.5px" width="13" height="12" viewBox="0 0 13 12"><path d="M4 1.3H1.2V10.7H11.8V1.3H9" fill="none" stroke="#9c9da1" stroke-width="1.3"/><path d="M6.5 1V6.5M4.3 4.5L6.5 6.8L8.7 4.5" fill="none" stroke="#9c9da1" stroke-width="1.3"/><path d="M3.5 8.5H9.5" stroke="#9c9da1" stroke-width="1"/></svg>
<svg class="a" style="left:708px;top:147px" width="11" height="13" viewBox="0 0 11 13"><circle cx="4.5" cy="2.5" r="1.8" fill="#9c9da1"/><path d="M3.5 4.5H5.5V7.2L9.5 8.2V12.2H3.5L1.5 9.2L3.5 8.5Z" fill="#9c9da1"/></svg>
<svg class="a" style="left:753px;top:147.5px" width="13" height="11" viewBox="0 0 13 11"><rect x="0.8" y="0.8" width="11.4" height="9.4" fill="none" stroke="#9c9da1" stroke-width="1.1" stroke-dasharray="2 1"/><rect x="2" y="4.5" width="5.5" height="5" fill="#9c9da1"/><path d="M1 2.5H12" stroke="#9c9da1" stroke-width="1.2"/></svg>
<svg class="a" style="left:800.5px;top:147.5px" width="10" height="12" viewBox="0 0 10 12"><path d="M0.5 0.5H6.5L9.5 3.5V11.5H0.5Z" fill="#1a73e2"/><path d="M2.5 5.5H7.5M2.5 7.5H7.5M2.5 9.5H6" stroke="#0d3f80" stroke-width="0.9"/></svg>
<svg class="a" style="left:845.5px;top:148px" width="13" height="10" viewBox="0 0 13 10"><path d="M4.5 1.2L1.2 5L4.5 8.8M8.5 1.2L11.8 5L8.5 8.8" fill="none" stroke="#a4a5a9" stroke-width="1.3"/></svg>
<svg class="a" style="left:707.5px;top:181px" width="12" height="12" viewBox="0 0 12 12"><path d="M6 0.6L11.4 6L6 11.4L0.6 6Z" fill="none" stroke="#a4a5a9" stroke-width="1.2"/><circle cx="6" cy="6" r="2.9" fill="none" stroke="#a4a5a9" stroke-width="1.2"/><circle cx="6" cy="6" r="1" fill="#a4a5a9"/></svg>
<!-- hand cursor -->
<svg class="a" style="left:818.5px;top:152px" width="16" height="18" viewBox="0 0 16 18"><path d="M5.5 2.2C5.5 1.1 7.5 1.1 7.5 2.2V6.5C8 6 9.5 6 9.8 6.8C10.3 6.3 11.6 6.5 11.8 7.3C12.3 7 13.5 7.2 13.5 8.2V12.5C13.5 15 12 16.6 9.5 16.6H8.5C6.8 16.6 5.8 15.6 5 14.2L2.2 10.6C1.6 9.8 2.6 8.7 3.6 9.5L5.5 11Z" fill="#fff" stroke="#0a0a0a" stroke-width="1"/></svg>
<!-- section header -->
<div class="a" style="left:685px;top:224.5px;width:197px;height:25px;background:#3b3d42"></div>
<svg class="a" style="left:696px;top:233px" width="7" height="8" viewBox="0 0 7 8"><path d="M0 1H7M3.5 1V8" stroke="#dfe0e2" stroke-width="1.8"/></svg>
<div class="a t" style="left:714px;top:231.5px;font-size:8.9px;line-height:11px;color:#e0e1e3;-webkit-text-stroke:0.25px #e0e1e3">Text/Button Layer Content</div>
<div class="a" style="left:685px;top:249.5px;width:197px;height:218.5px;background:#2e2f33"></div>
<div class="a t" style="left:703px;top:265px;font-size:7.6px;line-height:10px;color:#e8e9eb;font-weight:bold;letter-spacing:-0.1px">Idle</div>
<div class="a t" style="left:723.5px;top:265px;font-size:7.6px;line-height:10px;color:#7d7e82">Toggle</div>
<div class="a" style="left:778.5px;top:263px;width:15.5px;height:14.5px;background:#35363b;border-radius:2px"></div>
<svg class="a" style="left:782px;top:266px" width="9" height="8" viewBox="0 0 9 8"><path d="M1.2 0.5V5H7M5 3L7.2 5L5 7" fill="none" stroke="#d0d1d4" stroke-width="1.2"/></svg>
<div class="a" style="left:796.5px;top:263px;width:34.5px;height:14.5px;background:#35363b;border-radius:2px"></div>
<svg class="a" style="left:800px;top:266px" width="8" height="8" viewBox="0 0 8 8"><g fill="#c8c9cc"><rect x="0" y="0" width="1.8" height="1.8"/><rect x="3" y="0" width="1.8" height="1.8"/><rect x="6" y="0" width="1.8" height="1.8"/><rect x="0" y="3" width="1.8" height="1.8"/><rect x="3" y="3" width="1.8" height="1.8"/><rect x="6" y="3" width="1.8" height="1.8"/><rect x="0" y="6" width="1.8" height="1.8"/><rect x="3" y="6" width="1.8" height="1.8"/><rect x="6" y="6" width="1.8" height="1.8"/></g></svg>
<div class="a t" style="left:812px;top:265px;font-size:8.2px;line-height:10px;color:#cfd0d3">Icon</div>
<div class="a" style="left:834px;top:263px;width:37px;height:14.5px;background:#35363b;border-radius:2px"></div>
<svg class="a" style="left:836.5px;top:264.5px" width="10" height="10" viewBox="0 0 10 10"><path d="M0.5 0.5H5L9.5 5L5 9.5L0.5 5Z" fill="#d0d1d4"/><circle cx="2.7" cy="2.7" r="0.9" fill="#35363b"/></svg>
<div class="a t" style="left:849.5px;top:265px;font-size:8.2px;line-height:10px;color:#cfd0d3">Meta</div>
<div class="a" style="left:697.5px;top:281px;width:173px;height:111px;background:#28292d"></div>
<div class="a t" style="left:709px;top:294px;font-size:8.8px;line-height:12.5px;color:#e6e7e9;-webkit-text-stroke:0.25px #e6e7e9;letter-spacing:-0.15px">Crafting Tomorrow’s<br>Digital Narratives</div>
<div class="a t" style="left:685px;top:409.5px;width:61.5px;text-align:right;font-size:7.5px;line-height:10px;color:#8a8b8f">Placeholder</div>
<div class="a" style="left:756.5px;top:405.5px;width:114px;height:18.5px;background:#28292d"></div>
<div class="a t" style="left:685px;top:434.5px;width:61.5px;text-align:right;font-size:7.5px;line-height:10px;color:#8a8b8f">Line Break</div>
<div class="a" style="left:756.5px;top:431px;width:114px;height:17.5px;background:#28292d;overflow:hidden"><div class="t" style="position:absolute;left:5.5px;top:3.5px;font-size:8.3px;line-height:10px;color:#e4e5e7;letter-spacing:-0.05px;width:90px;overflow:hidden">Content and Width Based</div></div>
<svg class="a" style="left:858.5px;top:437.5px" width="6" height="4" viewBox="0 0 6 4"><path d="M0.3 0.5H5.7L3 3.5Z" fill="#b8b9bc"/></svg>
<!-- content behavior -->
<div class="a" style="left:685px;top:468px;width:197px;height:25px;background:#3b3d42"></div>
<svg class="a" style="left:695px;top:476.5px" width="9" height="7" viewBox="0 0 9 7"><path d="M0 1H9M0 3.5H9M0 6H9" stroke="#b8b9bc" stroke-width="1.3"/></svg>
<div class="a t" style="left:713.5px;top:474.5px;font-size:8.7px;line-height:11px;color:#e0e1e3;-webkit-text-stroke:0.25px #e0e1e3">Content Behavior</div>
<div class="a" style="left:685px;top:493px;width:197px;height:89px;background:#2e2f33"></div>
<div class="a t" style="left:685px;top:510px;width:61.5px;text-align:right;font-size:7.7px;line-height:10px;color:#8a8b8f">Text Align</div>
<div class="a" style="left:757px;top:505px;width:21.5px;height:22px;background:#0b6fdc;border-radius:2px"></div>
<div class="a" style="left:782px;top:505px;width:21.5px;height:22px;background:#323338;border-radius:2px"></div>
<div class="a" style="left:807px;top:505px;width:21.5px;height:22px;background:#323338;border-radius:2px"></div>
<div class="a" style="left:831.5px;top:505px;width:21.5px;height:22px;background:#323338;border-radius:2px"></div>
<svg class="a" style="left:763px;top:511px" width="10" height="10" viewBox="0 0 10 10"><path d="M0 1H9M0 3.7H6M0 6.3H9M0 9H6" stroke="#fff" stroke-width="1.3"/></svg>
<svg class="a" style="left:788px;top:511px" width="10" height="10" viewBox="0 0 10 10"><path d="M0.5 1H9.5M2 3.7H8M0.5 6.3H9.5M2 9H8" stroke="#c8c9cc" stroke-width="1.3"/></svg>
<svg class="a" style="left:813px;top:511px" width="10" height="10" viewBox="0 0 10 10"><path d="M0.5 1H9.5M3.5 3.7H9.5M0.5 6.3H9.5M3.5 9H9.5" stroke="#c8c9cc" stroke-width="1.3"/></svg>
<svg class="a" style="left:838px;top:511px" width="9" height="10" viewBox="0 0 9 10"><path d="M1.2 0.5V6H7.2M5.2 4L7.5 6L5.2 8" fill="none" stroke="#c8c9cc" stroke-width="1.2"/></svg>
<div class="a t" style="left:685px;top:543.5px;width:61.5px;text-align:right;font-size:7.7px;line-height:10px;color:#8a8b8f">Position</div>
<div class="a" style="left:757px;top:540px;width:94px;height:18px;background:#28292d"></div>
<div class="a" style="left:852px;top:540px;width:18.5px;height:18px;background:#28292d"></div>
<div class="a t" style="left:762px;top:543.5px;font-size:8.3px;line-height:11px;color:#eeeff1;-webkit-text-stroke:0.2px #eeeff1;letter-spacing:-0.05px">Relative</div>
<svg class="a" style="left:858.5px;top:547px" width="6" height="4" viewBox="0 0 6 4"><path d="M0.3 0.5H5.7L3 3.5Z" fill="#b8b9bc"/></svg>
<div class="a t" style="left:685px;top:568.5px;width:61.5px;text-align:right;font-size:7.7px;line-height:10px;color:#8a8b8f">Display</div>
<div class="a" style="left:757px;top:565px;width:94px;height:17px;background:#28292d"></div>
<div class="a" style="left:852px;top:565px;width:18.5px;height:17px;background:#28292d"></div>
<div class="a t" style="left:762px;top:568.5px;font-size:8.3px;line-height:11px;color:#eeeff1;-webkit-text-stroke:0.2px #eeeff1;letter-spacing:-0.05px">Block</div>
<svg class="a" style="left:858.5px;top:572px" width="6" height="4" viewBox="0 0 6 4"><path d="M0.3 0.5H5.7L3 3.5Z" fill="#b8b9bc"/></svg>
<div class="a" style="left:685px;top:582px;width:197px;height:12px;background:#0b6fdc"></div>
<div class="a" style="left:783px;top:582px;width:1px;height:12px;background:#3d8ae6"></div>
<div class="a" style="left:718.5px;top:590.5px;width:6.5px;height:4px;background:#fff;border-radius:1px 1px 0 0"></div>
<div class="a" style="left:733px;top:592px;width:5px;height:2px;background:#b8d4f6"></div>
<div class="a" style="left:812.5px;top:590.5px;width:6px;height:4px;background:#fff;border-radius:1px 1px 0 0"></div>
<div class="a" style="left:824px;top:592px;width:4px;height:2px;background:#b8d4f6"></div><div class="a" style="left:838px;top:592px;width:8px;height:2px;background:#b8d4f6"></div>

<!-- TIMELINE -->
<div class="a" style="left:0;top:442px;width:685px;height:152px;background:#232428"></div>
<div class="a" style="left:0;top:442px;width:685px;height:2px;background:#121315"></div>
<div class="a" style="left:0;top:463px;width:685px;height:1px;background:#2c2d31"></div>
<div class="a" style="left:0;top:486.5px;width:685px;height:1px;background:#2f3034"></div>
<div class="a" style="left:0;top:509px;width:685px;height:1px;background:#2f3034"></div>
<div class="a" style="left:0;top:530.5px;width:685px;height:1px;background:#2f3034"></div>
<div class="a" style="left:0;top:531.5px;width:685px;height:21.5px;background:#0e0f10"></div>
<div class="a" style="left:0;top:553px;width:685px;height:1px;background:#2f3034"></div>
<div class="a" style="left:0;top:575.5px;width:685px;height:1px;background:#2f3034"></div>
<div class="a" style="left:178px;top:442px;width:1px;height:152px;background:#34353a"></div>
<!-- toolbar icons -->
<svg class="a" style="left:8.5px;top:448.5px" width="9" height="9" viewBox="0 0 9 9"><path d="M4.5 0.3L8.7 2.8L4.5 5.3L0.3 2.8Z" fill="#c4c5c8"/><path d="M1.2 4.5L0.3 5.2L4.5 7.7L8.7 5.2L7.8 4.5L4.5 6.4Z" fill="#c4c5c8"/></svg>
<svg class="a" style="left:24px;top:449.5px" width="10" height="8" viewBox="0 0 10 8"><path d="M0 1H9.5M0 4H9.5M0 7H9.5" stroke="#b4b5b8" stroke-width="1.2"/></svg>
<svg class="a" style="left:39.5px;top:448.5px" width="12" height="10" viewBox="0 0 12 10"><path d="M0.7 1.2H4.5L5.5 2.2H11.2V9.3H0.7Z" fill="none" stroke="#c4c5c8" stroke-width="1.3"/></svg>
<svg class="a" style="left:111px;top:448px" width="10" height="10" viewBox="0 0 10 10"><path d="M0.6 0.6H9.4V9.4H0.6Z" fill="none" stroke="#9a9b9e" stroke-width="1.1" stroke-dasharray="1.2 0.9"/><path d="M5 0V10M0 5H10" stroke="#d0d1d4" stroke-width="1.5"/></svg>
<svg class="a" style="left:130px;top:449.5px" width="10" height="9" viewBox="0 0 10 9"><path d="M6.5 1.4H4.5A3 3 0 0 0 4.5 7.6H6.5" fill="none" stroke="#d6d7da" stroke-width="2.6"/><rect x="7.6" y="0.1" width="2.2" height="2.6" fill="#d6d7da"/><rect x="7.6" y="6.3" width="2.2" height="2.6" fill="#d6d7da"/></svg>
<svg class="a" style="left:148.3px;top:446.5px" width="10" height="12" viewBox="0 0 10 12"><circle cx="5" cy="7" r="4" fill="none" stroke="#c8c9cc" stroke-width="1.6"/><rect x="3.6" y="0.3" width="2.8" height="1.6" fill="#c8c9cc"/><path d="M3 4.8L7 9.2" stroke="#c8c9cc" stroke-width="1.3"/><circle cx="5" cy="7" r="1.3" fill="#c8c9cc"/></svg>
<svg class="a" style="left:166px;top:449.5px" width="8" height="7" viewBox="0 0 8 7"><path d="M0.5 0.3L7.5 3.5L0.5 6.7Z" fill="#c4c5c8"/></svg>
<!-- EDITOR box + ruler -->
<div class="a" style="left:190.5px;top:448px;width:38px;height:11.5px;border:1px solid #8a8b8f;border-radius:1px"></div>
<div class="a t" style="left:190.5px;top:449.5px;width:38px;text-align:center;font-size:7.2px;line-height:9px;color:#f0f1f3;font-weight:bold;letter-spacing:-0.1px">EDITOR</div>
<svg class="a" style="left:229px;top:444px" width="456" height="20" viewBox="229 444 456 20">
<rect x="235.19" y="457.3" width="1" height="1.3" fill="#46474c"/>
<rect x="241.36" y="457.3" width="1" height="1.3" fill="#46474c"/>
<rect x="247.53" y="457.3" width="1" height="1.3" fill="#46474c"/>
<rect x="253.70" y="451" width="1" height="9" fill="#3c3d42"/>
<text x="257.00" y="455" font-size="7.2" fill="#9a9b9f" font-family="Liberation Sans">1s</text>
<rect x="259.87" y="457.3" width="1" height="1.3" fill="#46474c"/>
<rect x="266.04" y="457.3" width="1" height="1.3" fill="#46474c"/>
<rect x="272.21" y="457.3" width="1" height="1.3" fill="#46474c"/>
<rect x="278.38" y="457.3" width="1" height="1.3" fill="#46474c"/>
<rect x="284.55" y="457.3" width="1" height="1.3" fill="#46474c"/>
<rect x="290.72" y="457.3" width="1" height="1.3" fill="#46474c"/>
<rect x="296.89" y="457.3" width="1" height="1.3" fill="#46474c"/>
<rect x="303.06" y="457.3" width="1" height="1.3" fill="#46474c"/>
<rect x="309.23" y="457.3" width="1" height="1.3" fill="#46474c"/>
<rect x="315.40" y="451" width="1" height="9" fill="#3c3d42"/>
<text x="318.70" y="455" font-size="7.2" fill="#9a9b9f" font-family="Liberation Sans">2s</text>
<rect x="321.57" y="457.3" width="1" height="1.3" fill="#46474c"/>
<rect x="327.74" y="457.3" width="1" height="1.3" fill="#46474c"/>
<rect x="333.91" y="457.3" width="1" height="1.3" fill="#46474c"/>
<rect x="340.08" y="457.3" width="1" height="1.3" fill="#46474c"/>
<rect x="346.25" y="457.3" width="1" height="1.3" fill="#46474c"/>
<rect x="352.42" y="457.3" width="1" height="1.3" fill="#46474c"/>
<rect x="358.59" y="457.3" width="1" height="1.3" fill="#46474c"/>
<rect x="364.76" y="457.3" width="1" height="1.3" fill="#46474c"/>
<rect x="370.93" y="457.3" width="1" height="1.3" fill="#46474c"/>
<rect x="377.10" y="451" width="1" height="9" fill="#3c3d42"/>
<text x="380.40" y="455" font-size="7.2" fill="#9a9b9f" font-family="Liberation Sans">3s</text>
<rect x="383.27" y="457.3" width="1" height="1.3" fill="#46474c"/>
<rect x="389.44" y="457.3" width="1" height="1.3" fill="#46474c"/>
<rect x="395.61" y="457.3" width="1" height="1.3" fill="#46474c"/>
<rect x="401.78" y="457.3" width="1" height="1.3" fill="#46474c"/>
<rect x="407.95" y="457.3" width="1" height="1.3" fill="#46474c"/>
<rect x="414.12" y="457.3" width="1" height="1.3" fill="#46474c"/>
<rect x="420.29" y="457.3" width="1" height="1.3" fill="#46474c"/>
<rect x="426.46" y="457.3" width="1" height="1.3" fill="#46474c"/>
<rect x="432.63" y="457.3" width="1" height="1.3" fill="#46474c"/>
<rect x="438.80" y="451" width="1" height="9" fill="#3c3d42"/>
<text x="442.10" y="455" font-size="7.2" fill="#9a9b9f" font-family="Liberation Sans">4s</text>
<rect x="444.97" y="457.3" width="1" height="1.3" fill="#46474c"/>
<rect x="451.14" y="457.3" width="1" height="1.3" fill="#46474c"/>
<rect x="457.31" y="457.3" width="1" height="1.3" fill="#46474c"/>
<rect x="463.48" y="457.3" width="1" height="1.3" fill="#46474c"/>
<rect x="469.65" y="457.3" width="1" height="1.3" fill="#46474c"/>
<rect x="475.82" y="457.3" width="1" height="1.3" fill="#46474c"/>
<rect x="481.99" y="457.3" width="1" height="1.3" fill="#46474c"/>
<rect x="488.16" y="457.3" width="1" height="1.3" fill="#46474c"/>
<rect x="494.33" y="457.3" width="1" height="1.3" fill="#46474c"/>
<rect x="500.50" y="451" width="1" height="9" fill="#3c3d42"/>
<text x="503.80" y="455" font-size="7.2" fill="#9a9b9f" font-family="Liberation Sans">5s</text>
<rect x="506.67" y="457.3" width="1" height="1.3" fill="#46474c"/>
<rect x="512.84" y="457.3" width="1" height="1.3" fill="#46474c"/>
<rect x="519.01" y="457.3" width="1" height="1.3" fill="#46474c"/>
<rect x="525.18" y="457.3" width="1" height="1.3" fill="#46474c"/>
<rect x="531.35" y="457.3" width="1" height="1.3" fill="#46474c"/>
<rect x="537.52" y="457.3" width="1" height="1.3" fill="#46474c"/>
<rect x="543.69" y="457.3" width="1" height="1.3" fill="#46474c"/>
<rect x="549.86" y="457.3" width="1" height="1.3" fill="#46474c"/>
<rect x="556.03" y="457.3" width="1" height="1.3" fill="#46474c"/>
<rect x="562.20" y="451" width="1" height="9" fill="#3c3d42"/>
<text x="565.50" y="455" font-size="7.2" fill="#9a9b9f" font-family="Liberation Sans">6s</text>
<rect x="568.37" y="457.3" width="1" height="1.3" fill="#46474c"/>
<rect x="574.54" y="457.3" width="1" height="1.3" fill="#46474c"/>
<rect x="580.71" y="457.3" width="1" height="1.3" fill="#46474c"/>
<rect x="586.88" y="457.3" width="1" height="1.3" fill="#46474c"/>
<rect x="593.05" y="457.3" width="1" height="1.3" fill="#46474c"/>
<rect x="599.22" y="457.3" width="1" height="1.3" fill="#46474c"/>
<rect x="605.39" y="457.3" width="1" height="1.3" fill="#46474c"/>
<rect x="611.56" y="457.3" width="1" height="1.3" fill="#46474c"/>
<rect x="617.73" y="457.3" width="1" height="1.3" fill="#46474c"/>
<rect x="623.90" y="451" width="1" height="9" fill="#3c3d42"/>
<text x="627.20" y="455" font-size="7.2" fill="#9a9b9f" font-family="Liberation Sans">7s</text>
<rect x="630.07" y="457.3" width="1" height="1.3" fill="#46474c"/>
<rect x="636.24" y="457.3" width="1" height="1.3" fill="#46474c"/>
<rect x="642.41" y="457.3" width="1" height="1.3" fill="#46474c"/>
<rect x="648.58" y="457.3" width="1" height="1.3" fill="#46474c"/>
<rect x="654.75" y="457.3" width="1" height="1.3" fill="#46474c"/>
<rect x="660.92" y="457.3" width="1" height="1.3" fill="#46474c"/>
</svg>
<svg class="a" style="left:669px;top:447.5px" width="10" height="10" viewBox="0 0 10 10"><path d="M0.8 0.8L9.2 9.2M9.2 0.8L0.8 9.2" stroke="#d0d1d4" stroke-width="1.2"/></svg>
<div class="a" style="left:683.5px;top:442px;width:1.5px;height:152px;background:#18191b"></div>
<!-- rows -->
<svg class="a" style="left:7.5px;top:471px" width="10" height="8" viewBox="0 0 10 8"><rect width="10" height="8" rx="0.8" fill="#1a73e2"/><path d="M1.5 6.5L4 4L5.5 5.3L7 4.2L8.5 6.5Z" fill="#0d3f80"/></svg>
<div class="a t" style="left:24px;top:469.5px;font-size:8.8px;line-height:11px;color:#dadbde;-webkit-text-stroke:0.2px #dadbde">Slide BG Animation</div>
<svg class="a" style="left:163.5px;top:471px" width="10" height="9" viewBox="0 0 10 9"><rect x="0.5" y="2" width="7.5" height="6.5" fill="none" stroke="#77787c" stroke-width="1"/><path d="M2 0.6H9.4V6.5" fill="none" stroke="#77787c" stroke-width="1"/><rect x="1.8" y="3.8" width="5" height="1.2" fill="#77787c"/></svg>
<svg class="a" style="left:14.5px;top:496px" width="6" height="4" viewBox="0 0 6 4"><path d="M0.2 0.3H5.8L3 3.7Z" fill="#c4c5c8"/></svg>
<svg class="a" style="left:22.5px;top:492px" width="11" height="11" viewBox="0 0 11 11"><rect x="1.5" y="1.5" width="8" height="8" fill="none" stroke="#1a73e2" stroke-width="1.3"/><rect x="0" y="0" width="3" height="3" fill="#1a73e2"/><rect x="8" y="0" width="3" height="3" fill="#1a73e2"/><rect x="0" y="8" width="3" height="3" fill="#1a73e2"/><rect x="8" y="8" width="3" height="3" fill="#1a73e2"/><path d="M5.5 3.5L7.3 7.5H3.7Z" fill="#1a73e2"/></svg>
<div class="a t" style="left:40px;top:492px;font-size:8.8px;line-height:11px;color:#dadbde;-webkit-text-stroke:0.2px #dadbde">Text-Group</div>
<svg class="a" style="left:28px;top:516px" width="8" height="8" viewBox="0 0 8 8"><path d="M0.5 1H7.5M4 1V8" stroke="#1f78e4" stroke-width="1.5"/></svg>
<div class="a t" style="left:42.5px;top:514.5px;font-size:8.8px;line-height:11px;color:#dadbde;-webkit-text-stroke:0.2px #dadbde">Subtitle</div>
<svg class="a" style="left:28px;top:538.5px" width="8" height="8" viewBox="0 0 8 8"><path d="M0.5 1H7.5M4 1V8" stroke="#1f78e4" stroke-width="1.5"/></svg>
<div class="a t" style="left:42.5px;top:537px;font-size:8.8px;line-height:11px;color:#f4f5f7;font-weight:bold">Title</div>
<svg class="a" style="left:28px;top:561px" width="8" height="8" viewBox="0 0 8 8"><path d="M0.5 1H7.5M4 1V8" stroke="#1f78e4" stroke-width="1.5"/></svg>
<div class="a t" style="left:42.5px;top:559px;font-size:8.8px;line-height:11px;color:#dadbde;-webkit-text-stroke:0.2px #dadbde">Description</div>
<svg class="a" style="left:4.5px;top:584.5px" width="6" height="6" viewBox="0 0 6 6"><circle cx="3" cy="3" r="2.6" fill="#e0338a"/></svg>
<svg class="a" style="left:26px;top:582px" width="10" height="10" viewBox="0 0 10 10"><circle cx="5" cy="5" r="4.2" fill="none" stroke="#1a73e2" stroke-width="1.3"/><circle cx="5" cy="5" r="1.9" fill="#1a73e2"/></svg>
<div class="a t" style="left:42.5px;top:581.5px;font-size:8.8px;line-height:11px;color:#dadbde;-webkit-text-stroke:0.2px #dadbde">Button</div>
<svg class="a" style="left:164.5px;top:494.3px" width="11" height="7" viewBox="0 0 11 7"><path d="M0.3 3.5H7.8M5.5 1.2L7.9 3.5L5.5 5.8M9.8 0.3V6.7" fill="none" stroke="#77787c" stroke-width="1"/></svg>
<svg class="a" style="left:164.5px;top:516.3px" width="11" height="7" viewBox="0 0 11 7"><path d="M0.3 3.5H7.8M5.5 1.2L7.9 3.5L5.5 5.8M9.8 0.3V6.7" fill="none" stroke="#77787c" stroke-width="1"/></svg>
<svg class="a" style="left:164.5px;top:538.5px" width="11" height="7" viewBox="0 0 11 7"><path d="M0.3 3.5H7.8M5.5 1.2L7.9 3.5L5.5 5.8M9.8 0.3V6.7" fill="none" stroke="#77787c" stroke-width="1"/></svg>
<svg class="a" style="left:164.5px;top:561.1px" width="11" height="7" viewBox="0 0 11 7"><path d="M0.3 3.5H7.8M5.5 1.2L7.9 3.5L5.5 5.8M9.8 0.3V6.7" fill="none" stroke="#77787c" stroke-width="1"/></svg>
<svg class="a" style="left:164.5px;top:583.7px" width="11" height="7" viewBox="0 0 11 7"><path d="M0.3 3.5H7.8M5.5 1.2L7.9 3.5L5.5 5.8M9.8 0.3V6.7" fill="none" stroke="#77787c" stroke-width="1"/></svg>
<div class="a t" style="left:190.6px;top:470.8px;width:62.5px;height:9.5px;background:#595c66;text-align:center;font-size:7px;line-height:9.5px;color:#fff;font-weight:bold;letter-spacing:-0.1px">1000</div>
<div class="a t" style="left:190.6px;top:493.2px;width:18.7px;height:9.7px;background:#595c66;text-align:center;font-size:7px;line-height:9.7px;color:#fff;font-weight:bold;letter-spacing:-0.1px">300</div>
<div class="a t" style="left:190.6px;top:515.3px;width:62.5px;height:10.1px;background:#595c66;text-align:center;font-size:7px;line-height:10.1px;color:#fff;font-weight:bold;letter-spacing:-0.1px">1000</div>
<div class="a t" style="left:193.5px;top:537.8px;width:62.5px;height:9.7px;background:#0b6fdc;text-align:center;font-size:7px;line-height:9.7px;color:#fff;font-weight:bold;letter-spacing:-0.1px">1000</div>
<div class="a t" style="left:196.7px;top:560px;width:62.7px;height:10.0px;background:#595c66;text-align:center;font-size:7px;line-height:10.0px;color:#fff;font-weight:bold;letter-spacing:-0.1px">1000</div>
<div class="a t" style="left:199.9px;top:582.5px;width:62.2px;height:10.1px;background:#595c66;text-align:center;font-size:7px;line-height:10.1px;color:#fff;font-weight:bold;letter-spacing:-0.1px">1000</div>

</body></html>
